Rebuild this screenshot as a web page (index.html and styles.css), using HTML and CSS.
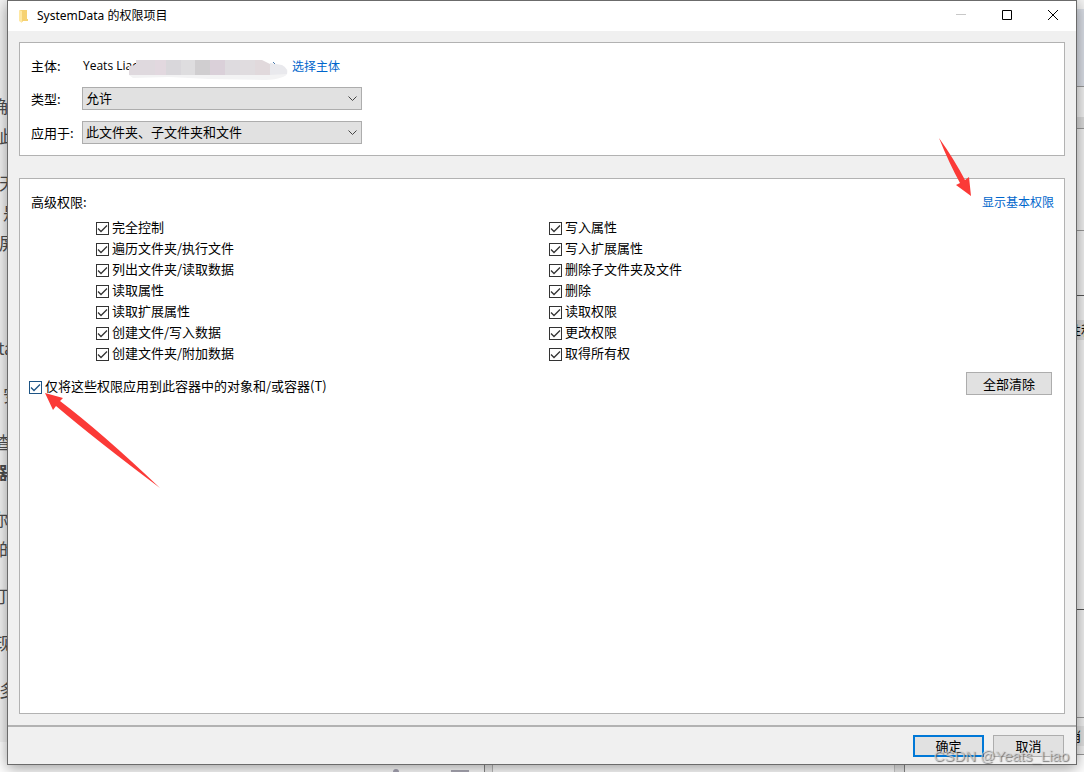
FILE: index.html
```html
<!DOCTYPE html>
<html lang="zh-CN">
<head>
    <meta charset="UTF-8">
    <meta name="viewport" content="width=device-width, initial-scale=1.0">
    <title>SystemData 的权限项目</title>
    <link rel="stylesheet" href="styles.css">
</head>
<body>
    <!-- 后面的窗口 -->
    <div class="desktop">
        <div class="article">
            <p>确<br><span class="in">此</span></p>
            <p><span class="in">天</span><br><span class="far">是</span><br><span class="in">屏</span></p>
            <p class="space">ta</p>
            <p><span class="far">安</span></p>
            <p><span class="mid">查</span><br><b>器</b></p>
            <p>你<br><span class="in">的</span></p>
            <p>订</p>
            <p><span class="mid">现</span></p>
            <p><span class="in">多</span></p>
        </div>
        <div class="back-windows">
            <div class="back-title"></div>
            <div class="back-tabs"></div>
            <div class="back-bar"></div>
            <div class="back-head"></div>
            <div class="back-sub"></div>
            <div class="back-list"><span>性和</span></div>
            <div class="back-detail"></div>
            <div class="back-foot"><span>消</span></div>
        </div>
        <div class="back-bottom">
            <svg class="back-icons" width="80" height="7" viewBox="0 0 80 7"><circle cx="6" cy="7" r="3" fill="#a9a7b6"/><path d="M61 6h18" stroke="#aeacb8" stroke-width="2"/></svg>
        </div>
    </div>

    <div class="window">
        <header class="titlebar">
            <svg class="folder" width="10" height="14" viewBox="0 0 10 14">
                <path d="M1 1h7v9h1v2H4v1L1 11z" fill="#f6d273"/>
                <path d="M0 1l3 1v12l-3-2z" fill="#ffe8a2"/>
            </svg>
            <h1>SystemData 的权限项目</h1>
            <button class="win-btn" type="button" aria-label="最小化" disabled><svg width="10" height="10"><path d="M0 4.5h10" stroke="#c8c8c8"/></svg></button>
            <button class="win-btn" type="button" aria-label="最大化"><svg width="10" height="10"><path d="M.5.5h9v9h-9z" fill="none" stroke="#000"/></svg></button>
            <button class="win-btn" type="button" aria-label="关闭"><svg width="10" height="10"><path d="M0 0l10 10M10 0L0 10" stroke="#000"/></svg></button>
        </header>

        <main class="content">
            <section class="panel subject">
                <span>主体:</span>
                <div class="principal">
                    <span class="name">Yeats Liao
                        <svg class="mosaic" width="160" height="20" viewBox="0 0 160 20">
                            <path d="M0 15h142l16-6q2 6-4 8-8 3-18 3L80 19 40 17 4 18z" fill="#f3f3f4"/>
                            <path d="M0 6l7-1V0h19v15H0z" fill="#dfd9de"/>
                            <path d="M26 0h11v15H26z" fill="#e2d8df"/>
                            <path d="M37 0h15v15H37z" fill="#d9d7db"/>
                            <path d="M52 0h14v15H52z" fill="#dedddf"/>
                            <path d="M66 0h15v15H66z" fill="#d0ced0"/>
                            <path d="M81 0h15v15H81z" fill="#dad0d9"/>
                            <path d="M96 0h15v15H96z" fill="#dedbdf"/>
                            <path d="M111 0h15v15h-15z" fill="#e0dcdf"/>
                            <path d="M126 0h7l8 4v11h-15z" fill="#e1d9dc"/>
                            <path d="M141 3l12 2q6 3 5 9l-17 1z" fill="#e9e9ed"/>
                            <path d="M144 2l2 2" stroke="#497bad"/>
                        </svg>
                    </span>
                    <a href="#">选择主体</a>
                </div>
                <label for="type">类型:</label>
                <select id="type"><option>允许</option></select>
                <label for="scope">应用于:</label>
                <select id="scope"><option>此文件夹、子文件夹和文件</option></select>
            </section>

            <section class="panel permissions">
                <div class="perm-head">
                    <h2>高级权限:</h2>
                    <a href="#">显示基本权限</a>
                </div>
                <div class="perm-list">
                    <div>
                        <label><input type="checkbox" checked>完全控制</label>
                        <label><input type="checkbox" checked>遍历文件夹/执行文件</label>
                        <label><input type="checkbox" checked>列出文件夹/读取数据</label>
                        <label><input type="checkbox" checked>读取属性</label>
                        <label><input type="checkbox" checked>读取扩展属性</label>
                        <label><input type="checkbox" checked>创建文件/写入数据</label>
                        <label><input type="checkbox" checked>创建文件夹/附加数据</label>
                    </div>
                    <div>
                        <label><input type="checkbox" checked>写入属性</label>
                        <label><input type="checkbox" checked>写入扩展属性</label>
                        <label><input type="checkbox" checked>删除子文件夹及文件</label>
                        <label><input type="checkbox" checked>删除</label>
                        <label><input type="checkbox" checked>读取权限</label>
                        <label><input type="checkbox" checked>更改权限</label>
                        <label><input type="checkbox" checked>取得所有权</label>
                    </div>
                </div>
                <div class="perm-foot">
                    <label><input class="active" type="checkbox" checked>仅将这些权限应用到此容器中的对象和/或容器(T)</label>
                    <button class="btn clear" type="button">全部清除</button>
                </div>
            </section>
        </main>

        <footer class="actions">
            <button class="btn primary" type="button">确定</button>
            <button class="btn" type="button">取消</button>
        </footer>

        <!-- 标注箭头 -->
        <svg class="arrow arrow-link" width="34" height="60" viewBox="0 0 34 60"><path d="M1 0Q16 21 27 42l4-3 2 19L18 47l4-2Q11 25 1 0z" fill="#fb3a37"/></svg>
        <svg class="arrow arrow-check" width="118" height="98" viewBox="0 0 118 98"><path d="M1 1l18 5-3 3Q57 40 116 96 52 48 12 14l-3 4z" fill="#fb3a37"/></svg>
    </div>
    <div class="watermark">CSDN @Yeats_Liao</div>
</body>
</html>
```
FILE: styles.css
```css
*{
    box-sizing: border-box;
    margin: 0;
    padding: 0;
}
html,body{
    height: 100%;
}
body{
    position: relative;
    display: flex;
    padding: 0 7px 7px;
    overflow: hidden;
    background: #f4f4f4;
    color: #000;
    font: 13px/20px "Noto Sans CJK SC", sans-serif;
}
h1,h2{
    font-size: inherit;
    font-weight: 400;
}
a{
    color: #0066cc;
    font-size: 12px;
    text-decoration: none;
}
button,select,input{
    font: inherit;
    color: inherit;
}

/* 后面的窗口 */
.desktop{
    position: absolute;
    inset: 0;
    overflow: hidden;
}
.article{
    position: absolute;
    left: -9px;
    top: 91px;
    width: 40px;
    color: #4d4d4d;
    font-size: 17px;
    line-height: 30px;
    white-space: nowrap;
}
.article p{
    margin-bottom: 17px;
}
.article .space{
    margin-top: 75px;
    padding-left: 7px;
}
.article .in{
    margin-left: 8px;
}
.article .mid{
    margin-left: 4px;
}
.article .far{
    margin-left: 12px;
}
.back-windows{
    position: absolute;
    top: 9px;
    right: 0;
    bottom: 17px;
    display: flex;
    flex-direction: column;
    width: 20px;
    background: #f0f0f0;
}
.back-windows div{
    border-bottom: 1px solid #999;
}
.back-title{
    height: 78px;
    background: #d9dde5;
}
.back-windows .back-tabs{
    height: 30px;
    border: 0;
}
.back-bar{
    height: 12px;
    background: #dadada;
}
.back-head{
    height: 102px;
}
.back-windows .back-sub{
    height: 65px;
    border-color: #555;
}
.back-windows .back-list{
    height: 314px;
    padding-top: 24px;
    border-color: #555;
}
.back-list span{
    display: block;
    background: #d9d9d9;
    text-indent: 4px;
    white-space: nowrap;
}
.back-detail{
    height: 108px;
}
.back-windows .back-foot{
    flex: 1;
    padding-top: 8px;
}
.back-foot span{
    display: block;
    background: #e1e1e1;
    text-indent: 4px;
}
.back-bottom{
    position: absolute;
    left: 0;
    right: 0;
    bottom: 0;
    height: 30px;
    background: linear-gradient(90deg, #fff 484px, #888 484px, #888 485px, #f0f0f0 485px, #f0f0f0 492px, #bbb 492px, #bbb 493px, #fff 493px, #fff 894px, #ccc 894px, #ccc 895px, #eee 895px, #eee 904px, #888 904px, #888 905px, #fff 905px);
    z-index: -1;
}
.back-icons{
    position: absolute;
    left: 390px;
    bottom: 0;
}

/* 对话框 */
.window{
    position: relative;
    display: flex;
    flex: 1;
    flex-direction: column;
    border: 1px solid #6b6b6b;
    background: #f0f0f0;
    box-shadow: 0 3px 14px rgba(0,0,0,.4);
}
.titlebar{
    display: flex;
    align-items: center;
    height: 30px;
    padding-left: 11px;
    background: #fff;
}
.titlebar h1{
    flex: 1;
    margin-left: 8px;
    font-family: "Noto Sans", "Noto Sans CJK SC", sans-serif;
    font-size: 12px;
}
.win-btn{
    display: flex;
    align-items: center;
    justify-content: center;
    width: 46px;
    height: 30px;
    padding-bottom: 2px;
    border: 0;
    background: none;
}
.content{
    display: flex;
    flex: 1;
    flex-direction: column;
    gap: 22px;
    padding: 11px;
}
.panel{
    border: 1px solid #b2b2b2;
    background: #fff;
}
.subject{
    display: grid;
    grid-template-columns: 51px 1fr;
    grid-template-rows: 20px 23px 23px;
    row-gap: 11px;
    align-items: center;
    padding: 13px 11px 11px;
}
.principal{
    display: flex;
}
.name{
    position: relative;
    width: 210px;
    padding-left: 1px;
    font-family: "Open Sans", sans-serif;
    font-size: 12px;
}
.mosaic{
    position: absolute;
    left: 47px;
    top: 4px;
}
select{
    width: 280px;
    height: 23px;
    padding: 0 0 2px 3px;
    border: 1px solid #adadad;
    border-radius: 0;
    background: #e1e1e1 url("data:image/svg+xml,%3Csvg xmlns='http://www.w3.org/2000/svg' width='9' height='6'%3E%3Cpath d='M.5.5l4 4 4-4' fill='none' stroke='%23444'/%3E%3C/svg%3E") no-repeat right 4px center;
    appearance: none;
}

.permissions{
    flex: 1;
    padding: 13px 10px 13px 9px;
}
.perm-head{
    display: flex;
    justify-content: space-between;
    padding-left: 2px;
}
.perm-list{
    display: grid;
    grid-template-columns: 453px 1fr;
    margin: 5px 0 8px;
    padding-left: 67px;
}
.permissions label{
    display: flex;
    align-items: flex-start;
    gap: 3px;
    height: 21px;
    line-height: 19px;
}
input{
    width: 13px;
    height: 13px;
    margin-top: 5px;
    border: 1px solid #333;
    background: #fff;
    appearance: none;
}
input:checked{
    background-image: url("data:image/svg+xml,%3Csvg xmlns='http://www.w3.org/2000/svg' width='11' height='11'%3E%3Cpath d='M1 5.5l3 3 6-6' fill='none' stroke='%23333' stroke-width='1.3'/%3E%3C/svg%3E");
}
input.active{
    border-color: #1d5485;
    background-image: url("data:image/svg+xml,%3Csvg xmlns='http://www.w3.org/2000/svg' width='11' height='11'%3E%3Cpath d='M1 5.5l3 3 6-6' fill='none' stroke='%231d5485' stroke-width='1.3'/%3E%3C/svg%3E");
}
.perm-foot{
    display: flex;
    align-items: flex-start;
    justify-content: space-between;
    padding-right: 2px;
}
.perm-foot label{
    margin-top: 4px;
}
.btn{
    width: 71px;
    height: 22px;
    border: 1px solid #adadad;
    background: #e1e1e1;
    line-height: 18px;
}
.btn.clear{
    width: 86px;
    height: 23px;
}
.btn.primary{
    border: 2px solid #0078d7;
}
.actions{
    display: flex;
    gap: 9px;
    justify-content: flex-end;
    height: 39px;
    padding: 8px 12px;
    border-top: 2px solid #b2b2b2;
}

.arrow{
    position: absolute;
    pointer-events: none;
}
.arrow-link{
    top: 137px;
    right: 104px;
}
.arrow-check{
    left: 36px;
    top: 391px;
}
.watermark{
    position: absolute;
    right: 15px;
    bottom: 6px;
    color: rgba(215,215,215,.7);
    font: 15px/20px "Liberation Sans", sans-serif;
    text-shadow: 1px 1px 1px rgba(90,90,90,.8);
}
```
